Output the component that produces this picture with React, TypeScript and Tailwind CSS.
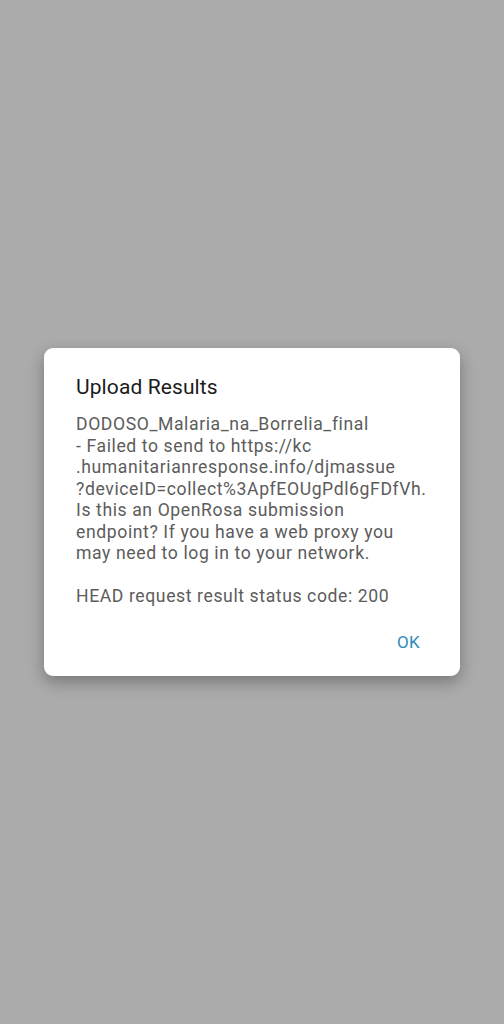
import React from "react";

export default function App() {
  const lines = [
    "DODOSO_Malaria_na_Borrelia_final",
    "- Failed to send to https://kc",
    ".humanitarianresponse.info/djmassue",
    "?deviceID=collect%3ApfEOUgPdl6gFDfVh.",
    "Is this an OpenRosa submission",
    "endpoint? If you have a web proxy you",
    "may need to log in to your network.",
  ];
  return (
    <div
      className="w-[504px] h-[1024px] bg-[#ababab] flex items-center justify-center"
      style={{ fontFamily: "Roboto, 'Noto Sans', sans-serif" }}
    >
      <div className="w-[416px] bg-white rounded-[9px] shadow-[0_6px_16px_rgba(0,0,0,0.3)] flex flex-col">
        <div className="pt-[25px] px-[32px] text-[21px] leading-[28px] text-[#1c1c1c] tracking-[0.1px]">
          Upload Results
        </div>
        <div className="mt-[13px] px-[32px] text-[17.6px] leading-[21.5px] text-[#5c5c5c] whitespace-nowrap tracking-[0.6px]">
          {lines.map((l) => (
            <div key={l}>{l}</div>
          ))}
          <div className="h-[21.5px]" />
          <div>HEAD request result status code: 200</div>
        </div>
        <div className="mt-[17px] pb-[15px] pr-[40px] flex justify-end">
          <div className="h-[36px] flex items-center text-[17px] text-[#2e8bb8] tracking-[0.3px]">
            OK
          </div>
        </div>
      </div>
    </div>
  );
}
